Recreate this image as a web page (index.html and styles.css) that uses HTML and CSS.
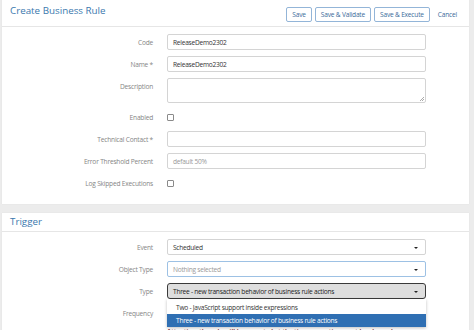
FILE: index.html
```
<!DOCTYPE html>
<html>
<head>
<meta charset="utf-8">
<link rel="stylesheet" href="styles.css">
</head>
<body>
<div class="page">
  <section class="panel panel-rule">
    <header class="panel-head head-rule">
      <h1 class="title">Create Business Rule</h1>
      <div class="actions">
        <button class="btn btn-save">Save</button>
        <button class="btn">Save &amp; Validate</button>
        <button class="btn">Save &amp; Execute</button>
        <span class="link">Cancel</span>
      </div>
    </header>
    <div class="form">
      <div class="row"><label class="lbl">Code</label><div class="field"><div class="input">ReleaseDemo2302</div></div></div>
      <div class="row"><label class="lbl">Name *</label><div class="field"><div class="input">ReleaseDemo2302</div></div></div>
      <div class="row row-top"><label class="lbl">Description</label><div class="field"><div class="input textarea"><span class="grip"></span></div></div></div>
      <div class="row"><label class="lbl">Enabled</label><div class="field check-field"><span class="check"></span></div></div>
      <div class="row"><label class="lbl">Technical Contact *</label><div class="field"><div class="input"></div></div></div>
      <div class="row"><label class="lbl">Error Threshold Percent</label><div class="field"><div class="input placeholder">default 50%</div></div></div>
      <div class="row"><label class="lbl">Log Skipped Executions</label><div class="field check-field"><span class="check"></span></div></div>
    </div>
  </section>

  <section class="panel panel-trigger">
    <header class="panel-head head-trigger">
      <h2 class="title">Trigger</h2>
    </header>
    <div class="form form-trigger">
      <div class="row"><label class="lbl">Event</label><div class="field"><div class="input select">Scheduled<span class="caret"></span></div></div></div>
      <div class="row"><label class="lbl">Object Type</label><div class="field"><div class="input select focus placeholder">Nothing selected<span class="caret"></span></div></div></div>
      <div class="row"><label class="lbl">Type</label>
        <div class="field">
          <div class="input select native">Three - new transaction behavior of business rule actions<span class="caret"></span></div>
          <ul class="menu">
            <li class="opt">Two - JavaScript support inside expressions</li>
            <li class="opt sel">Three - new transaction behavior of business rule actions</li>
          </ul>
        </div>
      </div>
      <div class="row"><label class="lbl">Frequency</label><div class="field"><div class="input"></div></div></div>
      <div class="row row-note"><span class="lbl"></span><div class="field"><p class="note">Attention: the rule will be executed at the time, execution must be planned</p></div></div>
    </div>
  </section>
</div>
</body>
</html>
```
FILE: styles.css
```
* { box-sizing: border-box; }
html, body { margin: 0; padding: 0; }
body {
  background: #ececec;
  font-family: "Open Sans", "Liberation Sans", sans-serif;
  width: 474px;
  height: 330px;
  overflow: hidden;
}
.page {
  padding: 0 5px 0 2px;
  display: flex;
  flex-direction: column;
  gap: 9px;
}
.panel {
  background: #fff;
  box-shadow: 0 0 1px rgba(0,0,0,0.08);
}
.panel-head {
  display: flex;
  align-items: center;
  justify-content: space-between;
  border-bottom: 1px solid #e6e6e6;
  padding: 0 8px;
}
.head-rule { height: 27px; align-items: flex-start; padding-top: 5px; }
.head-trigger { height: 19px; }
.title {
  margin: 0;
  font-weight: 400;
  font-size: 9.8px;
  color: #3a78ae;
  line-height: 12px;
}
.actions {
  display: flex;
  align-items: center;
  gap: 3px;
  padding-top: 2px;
  margin-right: 4px;
}
.btn {
  font-family: inherit;
  font-size: 6.6px;
  letter-spacing: -0.2px;
  color: #3b6c9b;
  background: #fff;
  border: 1px solid #93b5d8;
  border-radius: 2px;
  height: 15px;
  padding: 0 5px;
  line-height: 13px;
}
.btn-save { min-width: 25px; }
.link {
  font-size: 6.6px;
  letter-spacing: -0.2px;
  color: #3b6c9b;
  margin-left: 5px;
}
.form {
  padding: 7px 0 13px;
  display: flex;
  flex-direction: column;
  gap: 6px;
}
.form-trigger { padding-top: 7px; padding-bottom: 0; }
.row {
  display: flex;
  align-items: center;
  min-height: 16px;
}
.row-top { align-items: flex-start; }
.row-top .lbl { padding-top: 4px; }
.lbl {
  width: 151px;
  flex: none;
  text-align: right;
  font-size: 6.6px;
  letter-spacing: -0.2px;
  color: #858585;
}
.field {
  margin-left: 14px;
  width: 259px;
  position: relative;
}
.check-field { height: 16px; display: flex; align-items: center; }
.input {
  height: 16px;
  border: 1px solid #d4d4d4;
  border-radius: 2px;
  font-size: 6.6px;
  letter-spacing: -0.25px;
  color: #333;
  padding: 0 5px;
  display: flex;
  align-items: center;
  position: relative;
}
.textarea { height: 25px; }
.grip {
  position: absolute;
  right: 1px;
  bottom: 1px;
  width: 4px;
  height: 4px;
  background: linear-gradient(135deg, transparent 45%, #aaa 45%, #aaa 58%, transparent 58%, transparent 72%, #aaa 72%, #aaa 85%, transparent 85%);
}
.placeholder { color: #999; }
.check {
  width: 7px;
  height: 7px;
  border: 1px solid #8a8a8a;
  border-radius: 1px;
}
.caret {
  position: absolute;
  right: 7px;
  top: 7px;
  border-left: 2px solid transparent;
  border-right: 2px solid transparent;
  border-top: 2px solid #222;
}
.focus { border-color: #9dc1e4; }
.native {
  background: #dedede;
  border: 1.5px solid #3a3a3a;
  border-radius: 3px;
  color: #222;
}
.menu {
  position: absolute;
  left: 0;
  top: 16px;
  width: 259px;
  margin: 0;
  padding: 2px 0 0;
  list-style: none;
  background: #fff;
  box-shadow: 0 1px 3px rgba(0,0,0,0.25);
  z-index: 2;
}
.opt {
  height: 13px;
  line-height: 13px;
  font-size: 6.6px;
  letter-spacing: -0.25px;
  color: #333;
  padding-left: 9px;
}
.opt.sel {
  background: #2f6fb3;
  color: #fff;
}
.row-note { min-height: 8px; }
.note {
  margin: 0;
  font-size: 6px;
  line-height: 7px;
  font-weight: 700;
  color: #8a3a3a;
  white-space: nowrap;
  overflow: hidden;
}
```
